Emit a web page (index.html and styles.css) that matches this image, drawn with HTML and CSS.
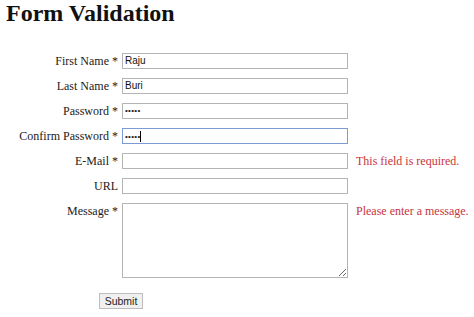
FILE: index.html
```html
<!DOCTYPE html>
<html>
<head>
<meta charset="utf-8">
<title>Form Validation</title>
<link rel="stylesheet" href="styles.css">
</head>
<body>
<h1 class="title">Form Validation</h1>
<form class="form">
  <div class="grid">
    <label class="lbl">First Name *</label>
    <input class="field" type="text" value="Raju">
    <span class="err"></span>

    <label class="lbl">Last Name *</label>
    <input class="field" type="text" value="Buri">
    <span class="err"></span>

    <label class="lbl">Password *</label>
    <input class="field pw" type="password" value="12345">
    <span class="err"></span>

    <label class="lbl">Confirm Password *</label>
    <span class="caret-wrap">
      <input class="field pw focused" type="password" value="12345">
      <span class="caret"></span>
    </span>
    <span class="err"></span>

    <label class="lbl">E-Mail *</label>
    <input class="field" type="text" value="">
    <span class="err">This field is required.</span>

    <label class="lbl">URL</label>
    <input class="field" type="text" value="">
    <span class="err"></span>

    <label class="lbl lbl-top">Message *</label>
    <textarea class="field area"></textarea>
    <span class="err err-top">Please enter a message.</span>
  </div>
  <div class="actions">
    <button type="button" class="submit">Submit</button>
  </div>
</form>
</body>
</html>
```
FILE: styles.css
```css
html, body {
  margin: 0;
  padding: 0;
  background: #ffffff;
}
body {
  padding: 0 6px;
  font-family: "Liberation Serif", "Times New Roman", serif;
  font-size: 12px;
  color: #1a1a1a;
}
.title {
  margin: 0;
  font-size: 24px;
  font-weight: bold;
  line-height: 27.6px;
  color: #111;
}
.form {
  margin-top: 25px;
}
.grid {
  display: grid;
  grid-template-columns: 112px 226px auto;
  column-gap: 4px;
  row-gap: 9px;
  align-items: center;
}
.lbl {
  text-align: right;
  line-height: 14px;
  white-space: nowrap;
}
.lbl-top {
  align-self: start;
  padding-top: 1px;
}
.field {
  box-sizing: border-box;
  width: 226px;
  height: 16px;
  margin: 0;
  padding: 0 2px;
  border: 1px solid #b4b4b4;
  border-radius: 0;
  font-family: "Liberation Sans", Arial, sans-serif;
  font-size: 10px;
  color: #111;
  background: #fff;
  outline: none;
}
.pw {
  font-size: 8px;
  letter-spacing: 0.3px;
  color: #222;
}
.focused {
  border-color: #7a9bd4;
}
.caret-wrap {
  position: relative;
  display: block;
  height: 16px;
}
.caret {
  position: absolute;
  left: 18px;
  top: 3px;
  width: 1px;
  height: 11px;
  background: #000;
}
.area {
  height: 75px;
  padding: 1px 2px;
  resize: both;
}
.err {
  margin-left: 4px;
  color: #c8343b;
  white-space: nowrap;
  line-height: 14px;
}
.err-top {
  align-self: start;
  padding-top: 1px;
}
.actions {
  padding-top: 15px;
  padding-left: 93px;
}
.submit {
  box-sizing: border-box;
  width: 44px;
  height: 16px;
  margin: 0;
  padding: 0;
  border: 1px solid #bdbdbd;
  border-radius: 0;
  background: #f0f0f0;
  font-family: "Liberation Sans", Arial, sans-serif;
  font-size: 10.5px;
  color: #222;
  line-height: 14px;
}
```
